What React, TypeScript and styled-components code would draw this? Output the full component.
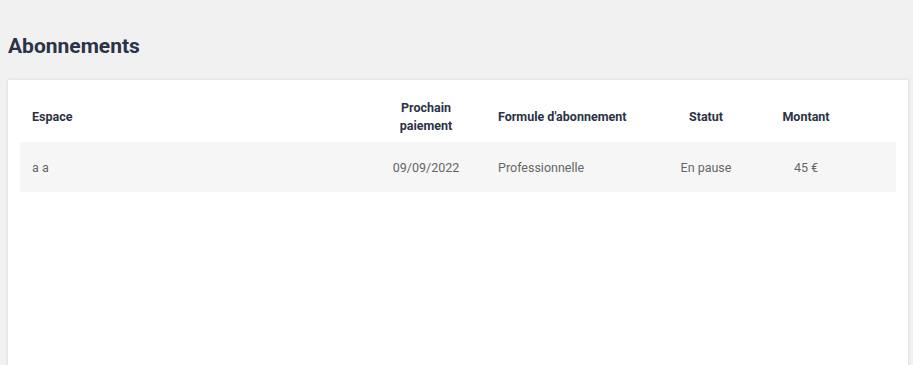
import React from 'react';
import styled, { createGlobalStyle } from 'styled-components';

interface Subscription {
  space: string;
  nextPayment: string;
  plan: string;
  status: string;
  amount: string;
}

const GlobalStyle = createGlobalStyle`
  body {
    margin: 0;
    background: #f1f1f1;
    font-family: Roboto, "Liberation Sans", sans-serif;
  }
`;

const Page = styled.div`
  padding: 33px 5px 0 8px;
  height: 365px;
  box-sizing: border-box;
  overflow: hidden;
`;

const Title = styled.h1`
  margin: 0 0 20px;
  font-size: 21px;
  font-weight: 700;
  color: #2c3347;
  line-height: 27px;
`;

const Card = styled.div`
  background: #fff;
  box-shadow: 0 0 3px rgba(0, 0, 0, 0.12);
  padding: 12px 12px 0;
  height: 290px;
`;

const Table = styled.table`
  width: 100%;
  border-collapse: collapse;
  table-layout: fixed;
`;

const Th = styled.th<{ $width?: number; $align?: 'left' | 'center' }>`
  width: ${p => (p.$width ? `${p.$width}px` : 'auto')};
  text-align: ${p => p.$align ?? 'left'};
  padding: 7px 12px;
  height: 50px;
  box-sizing: border-box;
  font-size: 12.5px;
  line-height: 18px;
  font-weight: 700;
  color: #2c3347;
`;

const Row = styled.tr`
  background: #f6f6f6;
`;

const Td = styled.td<{ $align?: 'left' | 'center' }>`
  text-align: ${p => p.$align ?? 'left'};
  padding: 0 12px;
  height: 50px;
  font-size: 12.5px;
  color: #666;
`;

const rows: Subscription[] = [
  { space: 'a a', nextPayment: '09/09/2022', plan: 'Professionnelle', status: 'En pause', amount: '45 €' },
];

export default function App() {
  return (
    <>
      <GlobalStyle />
      <Page>
        <Title>Abonnements</Title>
        <Card>
          <Table>
            <thead>
              <tr>
                <Th>Espace</Th>
                <Th $width={120} $align="center">Prochain paiement</Th>
                <Th $width={170}>Formule d'abonnement</Th>
                <Th $width={100} $align="center">Statut</Th>
                <Th $width={100} $align="center">Montant</Th>
                <Th $width={40} />
              </tr>
            </thead>
            <tbody>
              {rows.map((r, i) => (
                <Row key={i}>
                  <Td>{r.space}</Td>
                  <Td $align="center">{r.nextPayment}</Td>
                  <Td>{r.plan}</Td>
                  <Td $align="center">{r.status}</Td>
                  <Td $align="center">{r.amount}</Td>
                  <Td />
                </Row>
              ))}
            </tbody>
          </Table>
        </Card>
      </Page>
    </>
  );
}
